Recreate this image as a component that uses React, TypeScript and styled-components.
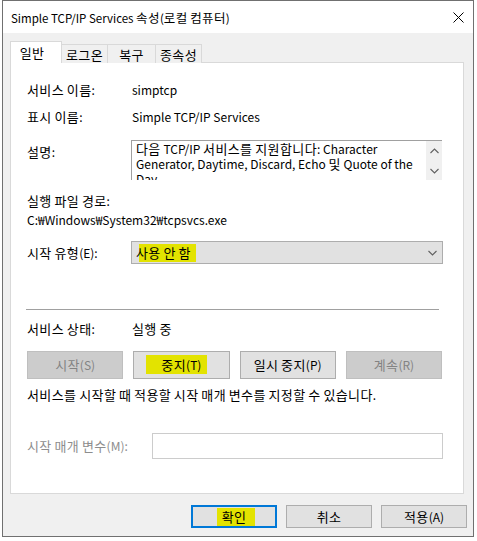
import React from 'react'
import styled, { createGlobalStyle } from 'styled-components'

const GlobalStyle = createGlobalStyle`
  html, body {
    margin: 0;
    padding: 0;
    background: #fff;
  }
  body {
    font-family: "Noto Sans CJK KR", "Noto Sans", sans-serif;
    font-size: 12px;
    color: #000;
  }
`

// Hangul runs get a touch more size and tracking so they sit like Malgun Gothic
const HangulRun = styled.span`
  font-size: 13px;
  letter-spacing: 0.4px;
`

const K = ({ children }: { children: string }) => (
  <>
    {children.split(/([\uAC00-\uD7A3]+)/).map((part, i) =>
      /[\uAC00-\uD7A3]/.test(part) ? <HangulRun key={i}>{part}</HangulRun> : part
    )}
  </>
)

const tabs = [
  { label: '일반', width: 52, active: true },
  { label: '로그온', width: 47 },
  { label: '복구', width: 49 },
  { label: '종속성', width: 47 },
]

const Chevron = ({ up }: { up?: boolean }) => (
  <svg width="9" height="6" viewBox="0 0 9 6">
    <path
      d={up ? 'M0.5 5 L4.5 1 L8.5 5' : 'M0.5 1 L4.5 5 L8.5 1'}
      fill="none"
      stroke="#606060"
      strokeWidth="1.1"
    />
  </svg>
)

export default function App() {
  return (
    <>
      <GlobalStyle />
      <Window>
        <TitleBar>
          <Title><K>Simple TCP/IP Services 속성(로컬 컴퓨터)</K></Title>
          <Close>
            <svg width="11" height="11" viewBox="0 0 11 11">
              <path d="M0.5 0.5 L10.5 10.5 M10.5 0.5 L0.5 10.5" stroke="#000" strokeWidth="1" />
            </svg>
          </Close>
        </TitleBar>
        <Body>
          <TabStrip>
            {tabs.map(t => (
              <Tab key={t.label} $active={t.active} $width={t.width}><K>{t.label}</K></Tab>
            ))}
          </TabStrip>
          <Panel>
            <Row $top={17} $height={20}>
              <Label><K>서비스 이름:</K></Label>
              <span>simptcp</span>
            </Row>
            <Row $top={7} $height={20}>
              <Label><K>표시 이름:</K></Label>
              <span>Simple TCP/IP Services</span>
            </Row>
            <Row $top={13} $height={40} $alignTop>
              <Label $pad={4}><K>설명:</K></Label>
              <DescBox>
                <DescText>
                  <div><K>다음 TCP/IP 서비스를 지원합니다: Character</K></div>
                  <div><K>Generator, Daytime, Discard, Echo 및 Quote of the</K></div>
                  <div>Day</div>
                </DescText>
                <ScrollBar>
                  <Chevron up />
                  <Chevron />
                </ScrollBar>
              </DescBox>
            </Row>
            <PathBlock>
              <div><K>실행 파일 경로:</K></div>
              <div>C:₩Windows₩System32₩tcpsvcs.exe</div>
            </PathBlock>
            <Row $top={12} $height={23}>
              <Label><K>시작 유형(E):</K></Label>
              <Combo>
                <Marker $skip={3} $padL={0} $padR={5}><K>사용 안 함</K></Marker>
                <Chevron />
              </Combo>
            </Row>
            <Separator />
            <Row $top={9} $height={20}>
              <Label><K>서비스 상태:</K></Label>
              <span><K>실행 중</K></span>
            </Row>
            <ButtonRow>
              <Button disabled><K>시작(S)</K></Button>
              <Button><Marker $skip={0} $padL={15} $padR={6} $pull><K>중지(T)</K></Marker></Button>
              <Button><K>일시 중지(P)</K></Button>
              <Button disabled><K>계속(R)</K></Button>
            </ButtonRow>
            <Row $top={6} $height={20}>
              <span><K>서비스를 시작할 때 적용할 시작 매개 변수를 지정할 수 있습니다.</K></span>
            </Row>
            <Row $top={28} $height={26}>
              <Label $width={125} $muted><K>시작 매개 변수(M):</K></Label>
              <ParamInput />
            </Row>
          </Panel>
          <Footer>
            <DialogButton $primary>
              <Marker $skip={0} $padL={5} $padR={9} $pull><K>확인</K></Marker>
            </DialogButton>
            <DialogButton><K>취소</K></DialogButton>
            <DialogButton><K>적용(A)</K></DialogButton>
          </Footer>
        </Body>
      </Window>
    </>
  )
}

const Window = styled.div`
  margin-left: 2px;
  width: 472px;
  height: 537px;
  box-sizing: border-box;
  border: 1px solid #707070;
  background: #f0f0f0;
  display: flex;
  flex-direction: column;
`

const TitleBar = styled.div`
  height: 32px;
  background: #fff;
  display: flex;
  align-items: center;
  justify-content: space-between;
  padding-left: 8px;
`

const Title = styled.div`
  font-size: 11.5px;
  line-height: 16px;
  padding-top: 1px;
  ${HangulRun} {
    font-size: 12.5px;
  }
`

const Close = styled.div`
  width: 30px;
  height: 32px;
  display: flex;
  align-items: center;
  justify-content: center;
  padding-top: 1px;
  box-sizing: border-box;
`

const Body = styled.div`
  flex: 1;
  display: flex;
  flex-direction: column;
  padding: 8px 0 0 7px;
`

const TabStrip = styled.div`
  display: flex;
  align-items: flex-end;
  height: 22px;
`

const Tab = styled.div<{ $active?: boolean; $width: number }>`
  position: relative;
  z-index: ${p => (p.$active ? 1 : 0)};
  width: ${p => p.$width}px;
  height: ${p => (p.$active ? 22 : 19)}px;
  margin-left: -1px;
  &:first-child { margin-left: 0; }
  box-sizing: border-box;
  border: 1px solid #d9d9d9;
  border-bottom: none;
  background: ${p => (p.$active ? '#fff' : '#f0f0f0')};
  display: flex;
  align-items: center;
  justify-content: center;
  padding-right: ${p => (p.$active ? 8 : 0)}px;
  padding-top: ${p => (p.$active ? 0 : 1)}px;
  line-height: 16px;
`

const Panel = styled.div`
  margin-top: -1px;
  width: 454px;
  height: 432px;
  box-sizing: border-box;
  border: 1px solid #d9d9d9;
  background: #fff;
  padding: 0 20px 0 16px;
  display: flex;
  flex-direction: column;
`

const Row = styled.div<{ $top: number; $height: number; $alignTop?: boolean }>`
  margin-top: ${p => p.$top}px;
  height: ${p => p.$height}px;
  display: flex;
  align-items: ${p => (p.$alignTop ? 'flex-start' : 'center')};
  line-height: 16px;
  white-space: nowrap;
`

const Label = styled.div<{ $width?: number; $pad?: number; $muted?: boolean }>`
  flex: none;
  width: ${p => p.$width ?? 105}px;
  padding-top: ${p => p.$pad ?? 0}px;
  color: ${p => (p.$muted ? '#8d8d8d' : '#000')};
`

const DescBox = styled.div`
  margin-left: -1px;
  width: 311px;
  height: 40px;
  box-sizing: border-box;
  border-top: 1px solid #a0a0a0;
  border-left: 1px solid #a0a0a0;
  display: flex;
  overflow: hidden;
`

const DescText = styled.div`
  flex: 1;
  padding: 0 0 0 4px;
  line-height: 15px;
  white-space: nowrap;
  overflow: hidden;
`

const ScrollBar = styled.div`
  flex: none;
  width: 16px;
  background: #f0f0f0;
  display: flex;
  flex-direction: column;
  align-items: center;
  justify-content: space-between;
  padding: 7px 0 6px;
  box-sizing: border-box;
`

const PathBlock = styled.div`
  margin-top: 11px;
  line-height: 19px;
  white-space: nowrap;
`

const Combo = styled.div`
  margin-left: -1px;
  width: 312px;
  height: 23px;
  box-sizing: border-box;
  border: 1px solid #adadad;
  background: #e1e1e1;
  display: flex;
  align-items: center;
  justify-content: space-between;
  padding: 0 5px 0 4px;
`

const Marker = styled.span<{ $skip: number; $padL: number; $padR: number; $pull?: boolean }>`
  background: linear-gradient(to right, transparent ${p => p.$skip}px, #e3e300 ${p => p.$skip}px);
  padding: 1px ${p => p.$padR}px 1px ${p => p.$padL}px;
  margin: 0 ${p => (p.$pull ? -p.$padR : -p.$padR)}px 0 ${p => (p.$pull ? -p.$padL : 0)}px;
  line-height: 16px;
`

const Separator = styled.div`
  margin-top: 45px;
  margin-left: -1px;
  width: 413px;
  height: 1px;
  background: #a0a0a0;
`

const ButtonRow = styled.div`
  margin-top: 12px;
  display: grid;
  grid-template-columns: repeat(4, 1fr);
  column-gap: 10px;
  width: 415px;
  height: 28px;
`

const Button = styled.button`
  font: inherit;
  margin: 0;
  padding: 0;
  box-sizing: border-box;
  border: 1px solid #adadad;
  background: #e1e1e1;
  color: #000;
  line-height: 16px;
  &:disabled {
    border-color: #bfbfbf;
    background: #cccccc;
    color: #838383;
  }
`

const ParamInput = styled.div`
  width: 291px;
  height: 26px;
  box-sizing: border-box;
  border: 1px solid #cccccc;
  background: #fff;
`

const Footer = styled.div`
  margin-top: 11px;
  display: flex;
  justify-content: flex-end;
  gap: 9px;
  padding-right: 6px;
`

const DialogButton = styled.button<{ $primary?: boolean }>`
  font: inherit;
  margin: 0;
  padding: 0;
  width: 86px;
  height: 23px;
  box-sizing: border-box;
  border: ${p => (p.$primary ? '2px solid #0078d7' : '1px solid #adadad')};
  background: #e1e1e1;
  color: #000;
  line-height: 16px;
  display: flex;
  align-items: center;
  justify-content: center;
`
